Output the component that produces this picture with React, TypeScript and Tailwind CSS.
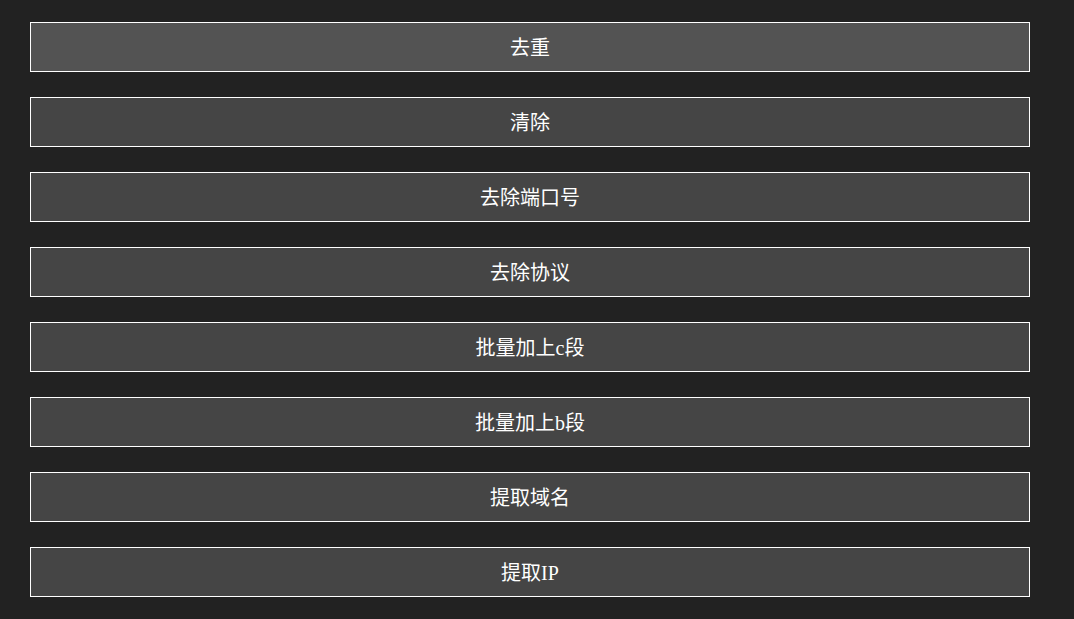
const actions = [
  "去重",
  "清除",
  "去除端口号",
  "去除协议",
  "批量加上c段",
  "批量加上b段",
  "提取域名",
  "提取IP",
];

export default function App() {
  return (
    <div className="min-h-screen bg-[#222222] pt-[22px] pb-[22px] pl-[30px]">
      <div className="flex w-[1000px] flex-col gap-[25px]">
        {actions.map((label, i) => (
          <button
            key={label}
            type="button"
            className={`h-[50px] w-full border border-white pt-[2px] text-[20px] leading-none text-white ${
              i === 0 ? "bg-[#535353]" : "bg-[#454545]"
            }`}
            style={{ fontFamily: '"Liberation Serif", "Noto Sans CJK SC", serif' }}
          >
            {label}
          </button>
        ))}
      </div>
    </div>
  );
}
